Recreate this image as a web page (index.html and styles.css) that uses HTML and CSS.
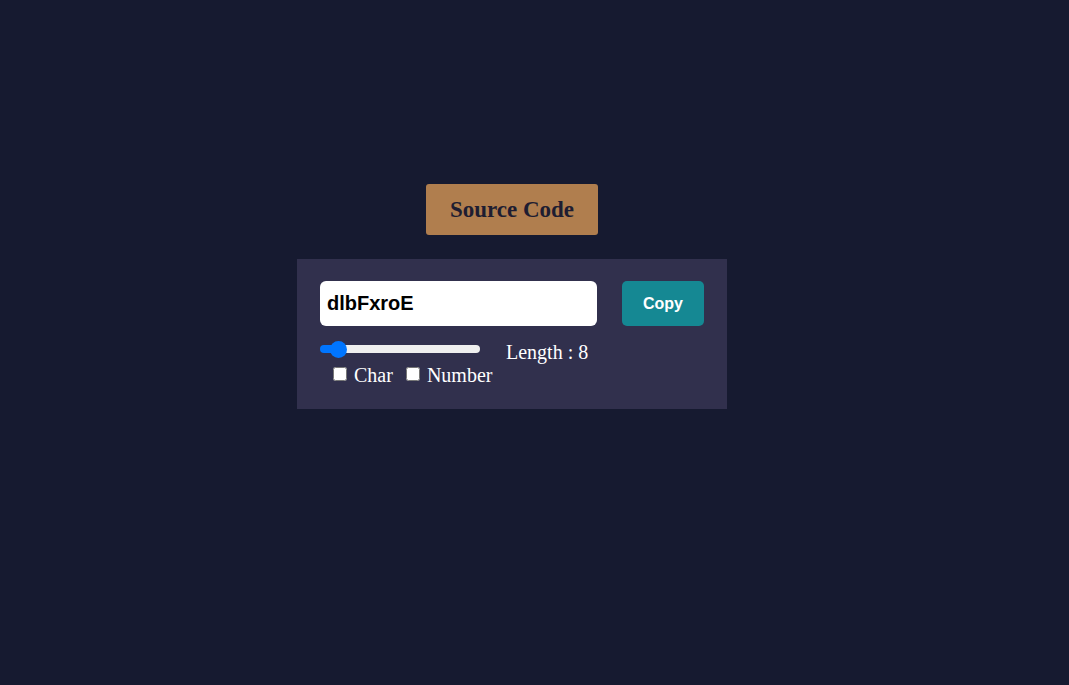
FILE: index.html
```html
<!DOCTYPE html>
<html>
<head>
<meta charset="utf-8">
<link rel="stylesheet" href="styles.css">
</head>
<body>
<main class="page">
  <button class="source-btn">Source Code</button>
  <section class="card">
    <div class="row-top">
      <input class="password" type="text" value="dlbFxroE" readonly>
      <button class="copy-btn">Copy</button>
    </div>
    <div class="row-range">
      <input class="range" type="range" min="6" max="35" value="8">
      <label class="length">Length : 8</label>
    </div>
    <div class="row-checks">
      <input class="check" type="checkbox" id="char"><label for="char" class="check-label">Char</label>
      <input class="check" type="checkbox" id="num"><label for="num" class="check-label">Number</label>
    </div>
  </section>
</main>
</body>
</html>
```

FILE: styles.css
```css
html, body {
  margin: 0;
  padding: 0;
  background: #161a30;
  height: 100%;
}
.page {
  display: flex;
  flex-direction: column;
  align-items: center;
  padding-top: 184px;
  padding-right: 45px;
  gap: 24px;
  font-family: "Liberation Serif", "Times New Roman", serif;
}
.source-btn {
  width: 172px;
  height: 51px;
  background: #b07e4e;
  color: #1e1d31;
  border: none;
  border-radius: 3px;
  font-family: "Liberation Serif", "Times New Roman", serif;
  font-weight: bold;
  font-size: 23px;
  padding: 0;
}
.card {
  width: 430px;
  box-sizing: border-box;
  background: #31304d;
  padding: 22px 23px 23px 23px;
  display: flex;
  flex-direction: column;
}
.row-top {
  display: flex;
  gap: 25px;
}
.password {
  width: 277px;
  height: 45px;
  box-sizing: border-box;
  border: none;
  border-radius: 6px;
  background: #ffffff;
  padding: 0 7px;
  font-family: "Liberation Sans", Arial, sans-serif;
  font-weight: bold;
  font-size: 20px;
  color: #000;
  outline: none;
}
.copy-btn {
  width: 82px;
  height: 45px;
  border: none;
  border-radius: 5px;
  background: #158893;
  color: #ffffff;
  font-family: "Liberation Sans", Arial, sans-serif;
  font-weight: bold;
  font-size: 16px;
  padding: 0;
}
.row-range {
  display: flex;
  align-items: center;
  gap: 26px;
  margin-top: 11px;
  height: 24px;
}
.range {
  -webkit-appearance: none;
  appearance: none;
  width: 160px;
  height: 8px;
  margin: 0;
  border-radius: 4px;
  background: linear-gradient(to right, #0075ff 0, #0075ff 16px, #efefef 16px, #efefef 100%);
  outline: none;
}
.range::-webkit-slider-thumb {
  -webkit-appearance: none;
  appearance: none;
  width: 17px;
  height: 17px;
  border-radius: 50%;
  background: #0075ff;
  border: none;
}
.length {
  color: #ffffff;
  font-size: 20px;
  line-height: 24px;
  margin-top: 6px;
}
.row-checks {
  display: flex;
  align-items: center;
  padding-left: 9px;
  height: 22px;
  margin-top: 3px;
}
.check {
  margin: 0 3px 0 4px;
  width: 14px;
  height: 14px;
  position: relative;
  top: -1px;
}
.check-label {
  color: #ffffff;
  font-size: 20px;
  margin-left: 4px;
  margin-right: 9px;
}
```
